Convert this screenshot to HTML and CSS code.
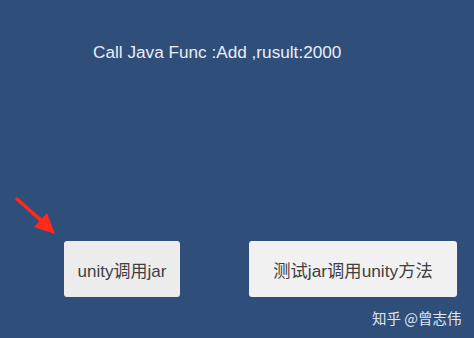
FILE: index.html
```html
<!DOCTYPE html>
<html lang="en">
<head>
    <meta charset="UTF-8">
    <meta name="viewport" content="width=device-width, initial-scale=1.0">
    <title>Unity Java Call</title>
    <link rel="stylesheet" href="styles.css">
</head>
<body>
    <div class="screen">
        <div class="result">Call Java Func :Add ,rusult:2000</div>

        <div class="buttons">
            <button class="btn btn-small">unity调用jar</button>
            <button class="btn btn-wide">测试jar调用unity方法</button>
        </div>

        <!-- annotation arrow drawn over the screenshot -->
        <svg class="arrow" width="60" height="50" viewBox="0 0 60 50">
            <line x1="7" y1="7" x2="34" y2="31" stroke="#ff2a1a" stroke-width="3.5" stroke-linecap="round"/>
            <polygon points="45,42 24,35 37,21" fill="#ff2a1a"/>
        </svg>

        <div class="watermark">知乎 @曾志伟</div>
    </div>
</body>
</html>
```

FILE: styles.css
```css
body {
    margin: 0;
    padding: 0;
    background-color: #304e7a;
    font-family: "Liberation Sans", Arial, "Noto Sans CJK SC", sans-serif;
}

.screen {
    position: relative;
    width: 474px;
    height: 338px;
    overflow: hidden;
}

.result {
    padding: 42px 0 0 93px;
    font-size: 17.2px;
    line-height: 20px;
    color: #e8eef7;
}

.buttons {
    display: flex;
    align-items: flex-start;
    margin-top: 179px;
    padding-left: 64px;
}

.btn {
    height: 56px;
    border: none;
    border-radius: 3px;
    background-color: #ececec;
    color: #3f3f3f;
    font-family: "Liberation Sans", Arial, "Noto Sans CJK SC", sans-serif;
    font-size: 17px;
    padding: 0;
    cursor: pointer;
}

.btn-small {
    width: 116px;
}

.btn-wide {
    width: 208px;
    margin-left: 69px;
    font-size: 17.3px;
    background-color: #f1f1f1;
}

.arrow {
    position: absolute;
    left: 10px;
    top: 192px;
}

.watermark {
    position: absolute;
    left: 372px;
    top: 307px;
    font-size: 14.5px;
    color: #dfe6f0;
    font-family: "Noto Sans CJK SC", sans-serif;
}
```
